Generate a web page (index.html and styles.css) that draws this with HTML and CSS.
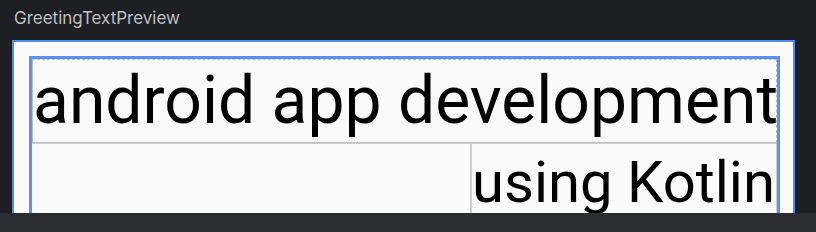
FILE: index.html
```html
<!DOCTYPE html>
<html lang="en">
<head>
    <meta charset="UTF-8">
    <title>GreetingTextPreview</title>
    <link rel="stylesheet" href="styles.css">
</head>
<body>
    <div class="preview-area">
        <div class="preview-title">GreetingTextPreview</div>

        <!-- Rendered composable -->
        <div class="device-frame">
            <div class="column selected">
                <div class="text-box heading">android app development</div>
                <div class="row">
                    <div class="spacer"></div>
                    <div class="text-box sub">using Kotlin</div>
                </div>
            </div>
        </div>
    </div>
    <div class="status-bar"></div>
</body>
</html>
```

FILE: styles.css
```css
* {
    margin: 0;
    padding: 0;
    box-sizing: border-box;
}

body {
    width: 816px;
    height: 232px;
    overflow: hidden;
    background: #1e1f22;
    font-family: Inter, "Noto Sans", sans-serif;
}

.preview-area {
    height: 213px;
    overflow: hidden;
}

.preview-title {
    height: 40px;
    padding: 8px 0 0 14px;
    font-size: 17px;
    line-height: 21px;
    color: #bcbec4;
}

.device-frame {
    margin-left: 12px;
    width: 783px;
    height: 200px;
    background: #fafafa;
    border: 2px solid #548af7;
    border-bottom: none;
    padding: 14px 0 0 15px;
}

.column {
    width: 751px;
    border: 3px solid #5b8ff6;
    border-bottom: none;
    height: 200px;
}

.text-box {
    font-family: Roboto, "Liberation Sans", sans-serif;
    color: #000;
    white-space: nowrap;
    border: 1px solid #cfcfcf;
}

.heading {
    height: 84px;
    font-size: 66px;
    line-height: 81px;
    border-top-style: dashed;
    border-right-style: dashed;
    border-color: #bdbdbd;
}

.row {
    display: flex;
}

.spacer {
    flex: 1;
    border-top: 1px solid #cfcfcf;
    border-right: 1px solid #cfcfcf;
}

.sub {
    font-size: 58px;
    line-height: 76px;
    height: 80px;
    padding-right: 1px;
    border-bottom: none;
}

.status-bar {
    height: 19px;
    background: #2b2d30;
}
```
